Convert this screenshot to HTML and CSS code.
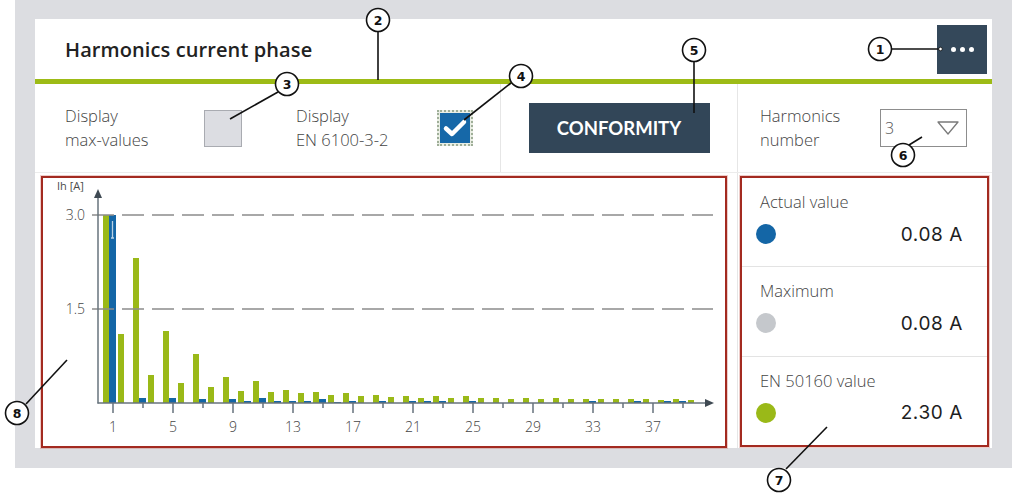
FILE: index.html
```html
<!DOCTYPE html>
<html lang="en">
<head>
<meta charset="utf-8">
<title>Harmonics current phase</title>
<link rel="stylesheet" href="styles.css">
</head>
<body>
<div class="frame">
  <div class="panel">
    <div class="header">
      <h1 class="title">Harmonics current phase</h1>
      <button class="more" type="button"><span class="dot"></span><span class="dot"></span><span class="dot"></span></button>
    </div>
    <div class="accent"></div>
    <div class="controls">
      <div class="cell cell-options">
        <span class="label label-max">Display<br>max-values</span>
        <span class="check"></span>
        <span class="label label-en">Display<br>EN 6100-3-2</span>
        <span class="check-on"><span class="check-fill"><svg width="28" height="28" viewBox="0 0 28 28"><polyline points="5,14.5 11,20 23,8" fill="none" stroke="#fff" stroke-width="4.5" stroke-linecap="round" stroke-linejoin="round"/></svg></span></span>
      </div>
      <div class="cell cell-btn"><button class="conformity" type="button">CONFORMITY</button></div>
      <div class="cell cell-num">
        <span class="label label-num">Harmonics<br>number</span>
        <div class="select"><span>3</span><svg width="22" height="14" viewBox="0 0 22 14"><polygon points="1,1 21,1 11,13" fill="none" stroke="#7a7a7a" stroke-width="1.3" stroke-linejoin="round"/></svg></div>
      </div>
    </div>
    <div class="main">
      <div class="chart-col">
        <div class="redbox chart-box">
          <svg class="chart" width="682" height="268" viewBox="43 178 682 268">
            <g fill="#9ab918">
              <rect x="103" y="215" width="6" height="188"/>
              <rect x="118" y="334" width="6" height="69"/>
              <rect x="133" y="258" width="6" height="145"/>
              <rect x="148" y="375" width="6" height="28"/>
              <rect x="163" y="331" width="6" height="72"/>
              <rect x="178" y="383" width="6" height="20"/>
              <rect x="193" y="354" width="6" height="49"/>
              <rect x="208" y="387" width="6" height="16"/>
              <rect x="223" y="377" width="6" height="26"/>
              <rect x="238" y="391" width="6" height="12"/>
              <rect x="253" y="381" width="6" height="22"/>
              <rect x="268" y="392" width="6" height="11"/>
              <rect x="283" y="390" width="6" height="13"/>
              <rect x="298" y="393" width="6" height="10"/>
              <rect x="313" y="392" width="6" height="11"/>
              <rect x="328" y="395" width="6" height="8"/>
              <rect x="343" y="393" width="6" height="10"/>
              <rect x="358" y="396" width="6" height="7"/>
              <rect x="373" y="395" width="6" height="8"/>
              <rect x="388" y="397" width="6" height="6"/>
              <rect x="403" y="396" width="6" height="7"/>
              <rect x="418" y="398" width="6" height="5"/>
              <rect x="433" y="396" width="6" height="7"/>
              <rect x="448" y="398" width="6" height="5"/>
              <rect x="463" y="396" width="6" height="7"/>
              <rect x="478" y="398" width="6" height="5"/>
              <rect x="493" y="398" width="6" height="5"/>
              <rect x="508" y="399" width="6" height="4"/>
              <rect x="523" y="398" width="6" height="5"/>
              <rect x="538" y="399" width="6" height="4"/>
              <rect x="553" y="398" width="6" height="5"/>
              <rect x="568" y="399" width="6" height="4"/>
              <rect x="583" y="399" width="6" height="4"/>
              <rect x="598" y="399" width="6" height="4"/>
              <rect x="613" y="399" width="6" height="4"/>
              <rect x="628" y="399" width="6" height="4"/>
              <rect x="643" y="399" width="6" height="4"/>
              <rect x="658" y="400" width="6" height="3"/>
              <rect x="673" y="399" width="6" height="4"/>
              <rect x="688" y="400" width="6" height="3"/>
            </g>
            <g fill="#1466a6">
              <rect x="109" y="215" width="7" height="188"/>
              <rect x="139" y="398" width="7" height="5"/>
              <rect x="169" y="398" width="7" height="5"/>
              <rect x="199" y="399" width="7" height="4"/>
              <rect x="229" y="399" width="7" height="4"/>
              <rect x="244" y="401" width="7" height="2"/>
              <rect x="259" y="398" width="7" height="5"/>
              <rect x="274" y="401" width="7" height="2"/>
              <rect x="289" y="401" width="7" height="2"/>
              <rect x="304" y="401" width="7" height="2"/>
              <rect x="319" y="399" width="7" height="4"/>
              <rect x="334" y="402" width="7" height="1"/>
              <rect x="349" y="401" width="7" height="2"/>
              <rect x="379" y="401" width="7" height="2"/>
              <rect x="409" y="401" width="7" height="2"/>
              <rect x="424" y="401" width="7" height="2"/>
              <rect x="439" y="401" width="7" height="2"/>
              <rect x="469" y="401" width="7" height="2"/>
              <rect x="589" y="401" width="7" height="2"/>
              <rect x="634" y="401" width="7" height="2"/>
              <rect x="664" y="401" width="7" height="2"/>
              <rect x="679" y="401" width="7" height="2"/>
            </g>
            <path d="M112.5 221 V238 M111 238 h3" stroke="#fff" stroke-width="1.3" fill="none" opacity="0.7"/>
            <g stroke="#8c8c8c" stroke-width="1.5" stroke-dasharray="22 8" fill="none">
              <line x1="92" y1="215" x2="713" y2="215"/>
              <line x1="92" y1="309" x2="713" y2="309"/>
            </g>
            <g stroke="#67737d" stroke-width="1.5" fill="none">
              <line x1="98" y1="196" x2="98" y2="403.5"/>
              <line x1="97.5" y1="403" x2="706" y2="403"/>
              <path d="M113 403 v10 M173 403 v10 M233 403 v10 M293 403 v10 M353 403 v10 M413 403 v10 M473 403 v10 M533 403 v10 M593 403 v10 M653 403 v10"/>
              <path d="M143 403 v5 M203 403 v5 M263 403 v5 M323 403 v5 M383 403 v5 M443 403 v5 M503 403 v5 M563 403 v5 M623 403 v5 M683 403 v5"/>
            </g>
            <polygon points="98,189 94,198 102,198" fill="#3f4a53"/>
            <polygon points="714,403 705,399 705,407" fill="#3f4a53"/>
            <text class="ax-title" x="57" y="190">Ih [A]</text>
            <g class="ax-y">
              <text x="85" y="220">3.0</text>
              <text x="85" y="314">1.5</text>
            </g>
            <g class="ax-x">
              <text x="113" y="432">1</text>
              <text x="173" y="432">5</text>
              <text x="233" y="432">9</text>
              <text x="293" y="432">13</text>
              <text x="353" y="432">17</text>
              <text x="413" y="432">21</text>
              <text x="473" y="432">25</text>
              <text x="533" y="432">29</text>
              <text x="593" y="432">33</text>
              <text x="653" y="432">37</text>
            </g>
          </svg>
        </div>
      </div>
      <div class="side-col">
        <div class="redbox values">
          <div class="row">
            <div class="row-label">Actual value</div>
            <div class="row-val"><span class="swatch sw-blue"></span><span class="val">0.08 A</span></div>
          </div>
          <div class="row">
            <div class="row-label">Maximum</div>
            <div class="row-val"><span class="swatch sw-gray"></span><span class="val">0.08 A</span></div>
          </div>
          <div class="row">
            <div class="row-label">EN 50160 value</div>
            <div class="row-val"><span class="swatch sw-green"></span><span class="val">2.30 A</span></div>
          </div>
        </div>
      </div>
    </div>
  </div>
</div>

<svg class="callouts" width="1024" height="499" viewBox="0 0 1024 499">
  <g stroke="#111" stroke-width="1.6" fill="none">
    <line x1="891" y1="49" x2="940" y2="49"/>
    <line x1="378" y1="31" x2="378" y2="80"/>
    <line x1="278" y1="92" x2="230" y2="119"/>
    <line x1="511" y1="83" x2="464" y2="120"/>
    <line x1="694" y1="61" x2="694" y2="113"/>
    <line x1="909" y1="145" x2="922" y2="137"/>
    <line x1="786" y1="469" x2="827" y2="427"/>
    <line x1="26" y1="404" x2="67" y2="360"/>
  </g>
  <circle cx="940.5" cy="49" r="1.8" fill="#fff" stroke="#111" stroke-width="0.8"/>
  <g fill="#fff" stroke="#111" stroke-width="1.6">
    <circle cx="880" cy="49" r="11.5"/>
    <circle cx="378" cy="20" r="11.5"/>
    <circle cx="287" cy="84" r="11.5"/>
    <circle cx="521" cy="76" r="11.5"/>
    <circle cx="694" cy="50" r="11.5"/>
    <circle cx="903" cy="155" r="11.5"/>
    <circle cx="779" cy="480" r="11.5"/>
    <circle cx="17" cy="413" r="11.5"/>
  </g>
  <g class="callout-num">
    <text x="880" y="53.5">1</text>
    <text x="378" y="24.5">2</text>
    <text x="287" y="88.5">3</text>
    <text x="521" y="80.5">4</text>
    <text x="694" y="54.5">5</text>
    <text x="903" y="159.5">6</text>
    <text x="779" y="484.5">7</text>
    <text x="17" y="417.5">8</text>
  </g>
</svg>
</body>
</html>
```

FILE: styles.css
```css
* { box-sizing: border-box; }

html, body {
  margin: 0;
  padding: 0;
}

body {
  width: 1024px;
  height: 499px;
  position: relative;
  overflow: hidden;
  background: #ffffff;
  font-family: "Open Sans", "Liberation Sans", sans-serif;
}

.frame {
  margin-left: 15px;
  width: 997px;
  height: 468px;
  background: #dcdde1;
  padding: 19px 20px 20px 20px;
}

.panel {
  background: #ffffff;
  height: 429px;
  display: flex;
  flex-direction: column;
}

.header {
  height: 60px;
  display: flex;
  align-items: center;
  justify-content: space-between;
  padding-left: 30px;
  padding-right: 5px;
}

.title {
  margin: 0;
  font-size: 20px;
  font-weight: 600;
  color: #222222;
  letter-spacing: 0.1px;
}

.more {
  width: 50px;
  height: 49px;
  background: #34485a;
  border: 0;
  padding: 0;
  display: flex;
  gap: 4px;
  align-items: center;
  justify-content: center;
}

.more .dot {
  width: 5px;
  height: 5px;
  border-radius: 50%;
  background: #ffffff;
}

.accent {
  height: 5px;
  background: #9dbb16;
}

.controls {
  height: 89px;
  display: flex;
  border-bottom: 1px solid #ececec;
}

.cell {
  display: flex;
  align-items: center;
}

.cell-options {
  width: 466px;
  padding-left: 30px;
  border-right: 1px solid #e6e6e6;
}

.cell-btn {
  width: 237px;
  justify-content: center;
  border-right: 1px solid #e6e6e6;
}

.cell-num {
  flex: 1;
  padding-left: 22px;
}

.label {
  font-size: 16.5px;
  font-weight: 300;
  line-height: 24px;
  color: #444444;
}

.label-max { width: 139px; }
.label-en { width: 141px; margin-left: 54px; }
.label-num { width: 120px; }

.check {
  width: 38px;
  height: 37px;
  background: #dcdde2;
  border: 1px solid #a9abb1;
}

.check-on {
  width: 36px;
  height: 36px;
  border: 2px dotted #9fae98;
  padding: 1px;
  background: #e9eee4;
}

.check-fill {
  width: 100%;
  height: 100%;
  background: #1668a8;
  display: flex;
  align-items: center;
  justify-content: center;
}

.conformity {
  width: 181px;
  height: 50px;
  background: #324658;
  border: 0;
  color: #ffffff;
  font-family: Lato, "Open Sans", sans-serif;
  font-weight: 700;
  font-size: 18.5px;
  padding: 0;
}

.select {
  width: 87px;
  height: 38px;
  border: 1px solid #8d8d8d;
  display: flex;
  align-items: center;
  justify-content: space-between;
  padding: 0 7px 0 4px;
  font-size: 16px;
  font-weight: 300;
  color: #555555;
}

.main {
  flex: 1;
  display: flex;
}

.chart-col {
  width: 703px;
  padding: 3px 10px 0 6px;
  border-right: 1px solid #e6e6e6;
}

.side-col {
  flex: 1;
  padding: 3px 3px 1px 2px;
}

.redbox {
  height: 100%;
  border: 2px solid #a32a20;
  box-shadow: 0 0 0 1px rgba(205, 110, 100, 0.35);
}

.chart {
  display: block;
}

.ax-title {
  font-size: 11px;
  fill: #4a4a4a;
  font-family: "Open Sans", sans-serif;
}

.ax-y text {
  font-size: 14px;
  font-weight: 300;
  fill: #444444;
  text-anchor: end;
  font-family: "Open Sans", sans-serif;
}

.ax-x text {
  font-size: 14px;
  font-weight: 300;
  fill: #444444;
  text-anchor: middle;
  font-family: "Open Sans", sans-serif;
}

.values {
  display: flex;
  flex-direction: column;
}

.row {
  flex: 1;
  padding: 12px 24px 0 14px;
  border-bottom: 1px solid #e3e3e3;
}

.row:last-child {
  border-bottom: 0;
}

.row-label {
  font-size: 16.5px;
  font-weight: 300;
  line-height: 24px;
  color: #444444;
  padding-left: 4px;
}

.row-val {
  margin-top: 8px;
  height: 24px;
  display: flex;
  align-items: center;
  justify-content: space-between;
}

.swatch {
  width: 20px;
  height: 20px;
  border-radius: 50%;
}

.sw-blue { background: #1466a6; }
.sw-gray { background: #c5c8cc; }
.sw-green { background: #9ab918; }

.val {
  font-family: Inter, "Open Sans", sans-serif;
  font-size: 19px;
  font-weight: 400;
  color: #1e1e1e;
  letter-spacing: 0.6px;
}

.callouts {
  position: absolute;
  left: 0;
  top: 0;
  pointer-events: none;
}

.callout-num text {
  font-family: "DejaVu Sans", sans-serif;
  font-weight: 700;
  font-size: 12.5px;
  fill: #111111;
  text-anchor: middle;
}
```
